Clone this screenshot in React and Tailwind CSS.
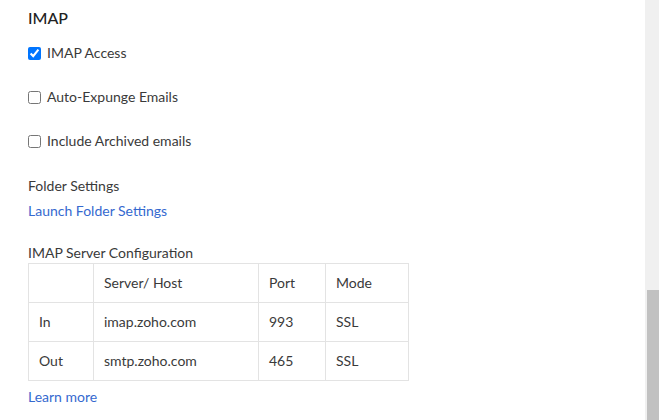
import React from "react";

export default function App() {
  const rows = [
    ["", "Server/ Host", "Port", "Mode"],
    ["In", "imap.zoho.com", "993", "SSL"],
    ["Out", "smtp.zoho.com", "465", "SSL"],
  ];
  const widths = ["w-[65px]", "w-[165px]", "w-[67px]", "w-[83px]"];
  return (
    <div className="flex h-[420px] w-[659px] overflow-hidden bg-white text-[14px] text-[#3a3a3a]" style={{ fontFamily: "Lato, 'Noto Sans', sans-serif" }}>
      <div className="flex-1 pl-[28px]">
        <div className="h-[31px] pt-[8px] text-[16px] font-medium leading-[20px] text-[#222]">IMAP</div>
        {[
          ["IMAP Access", true],
          ["Auto-Expunge Emails", false],
          ["Include Archived emails", false],
        ].map(([label, checked]) => (
          <label key={label} className="flex h-[44px] items-center">
            <input type="checkbox" defaultChecked={checked} className="m-0 h-[13px] w-[13px] accent-[#0075ff]" />
            <span className="ml-[6px] leading-[20px]">{label}</span>
          </label>
        ))}
        <div className="mt-[11px] leading-[24px]">Folder Settings</div>
        <div className="mt-[1px] leading-[24px] text-[#3569cf]">Launch Folder Settings</div>
        <div className="mt-[20px] leading-[20px]">IMAP Server Configuration</div>
        <table className="border-collapse">
          <tbody>
            {rows.map((r, i) => (
              <tr key={i} className="h-[39px]">
                {r.map((c, j) => (
                  <td key={j} className={`border border-[#e3e3e3] p-0 pb-[2px] pl-[10px] align-middle ${widths[j]}`}>{c}</td>
                ))}
              </tr>
            ))}
          </tbody>
        </table>
        <div className="mt-[6px] leading-[20px] text-[#3569cf]">Learn more</div>
      </div>
      <div className="flex h-full w-[14px] flex-col bg-[#f0f0f0]">
        <div className="h-[290px]" />
        <div className="ml-[2px] flex-1 bg-[#c1c1c1]" />
      </div>
    </div>
  );
}
